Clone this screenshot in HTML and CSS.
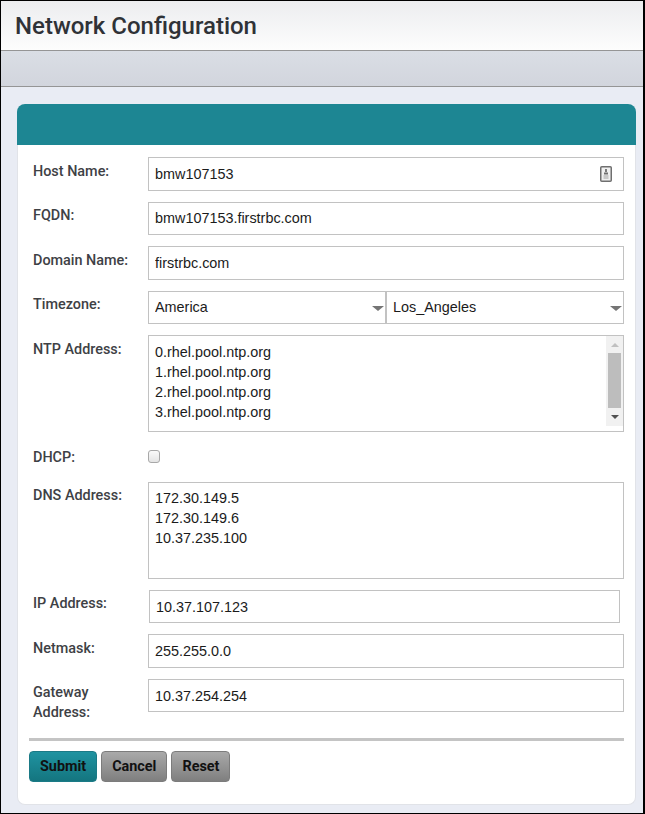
FILE: index.html
```html
<!DOCTYPE html>
<html lang="en">
<head>
<meta charset="utf-8">
<title>Network Configuration</title>
<link rel="stylesheet" href="styles.css">
</head>
<body>
<div class="frame">
  <header class="title-bar"><h1>Network Configuration</h1></header>
  <div class="sub-bar"></div>
  <main class="content">
    <section class="card">
      <div class="card-head"></div>
      <form class="card-body">
        <div class="row">
          <label class="lbl">Host Name:</label>
          <div class="field">
            <input class="inp" type="text" value="bmw107153">
            <svg class="host-icon" width="12" height="16" viewBox="0 0 12 16">
              <rect x="0.75" y="0.75" width="10.5" height="14.5" rx="1" fill="#f0f0f0" stroke="#6f6f6f" stroke-width="1.5"/>
              <path d="M6 3 L6 6 M4 7.5 L8 7.5" stroke="#6f6f6f" stroke-width="1.8" fill="none"/>
              <path d="M3.5 10 H8.5 M3.5 12 H8.5" stroke="#a0a0a0" stroke-width="1.2" fill="none"/>
            </svg>
          </div>
        </div>
        <div class="row"><label class="lbl">FQDN:</label><div class="field"><input class="inp" type="text" value="bmw107153.firstrbc.com"></div></div>
        <div class="row"><label class="lbl">Domain Name:</label><div class="field"><input class="inp" type="text" value="firstrbc.com"></div></div>
        <div class="row">
          <label class="lbl">Timezone:</label>
          <div class="field selects">
            <div class="sel"><select class="inp"><option>America</option></select></div>
            <div class="sel"><select class="inp"><option>Los_Angeles</option></select></div>
          </div>
        </div>
        <div class="row">
          <label class="lbl">NTP Address:</label>
          <div class="field">
            <textarea class="inp area" readonly>0.rhel.pool.ntp.org
1.rhel.pool.ntp.org
2.rhel.pool.ntp.org
3.rhel.pool.ntp.org</textarea>
            <div class="scroll">
              <span class="arrow up"></span>
              <span class="thumb"></span>
              <span class="arrow down"></span>
            </div>
          </div>
        </div>
        <div class="row row-check"><label class="lbl">DHCP:</label><div class="field"><span class="check"></span></div></div>
        <div class="row">
          <label class="lbl">DNS Address:</label>
          <div class="field"><textarea class="inp area area-dns" readonly>172.30.149.5
172.30.149.6
10.37.235.100</textarea></div>
        </div>
        <div class="row"><label class="lbl">IP Address:</label><div class="field field-ip"><input class="inp" type="text" value="10.37.107.123"></div></div>
        <div class="row"><label class="lbl">Netmask:</label><div class="field"><input class="inp" type="text" value="255.255.0.0"></div></div>
        <div class="row row-last"><label class="lbl">Gateway Address:</label><div class="field"><input class="inp" type="text" value="10.37.254.254"></div></div>
        <div class="divider"></div>
        <div class="actions">
          <button type="button" class="btn btn-primary">Submit</button>
          <button type="button" class="btn">Cancel</button>
          <button type="button" class="btn">Reset</button>
        </div>
      </form>
    </section>
  </main>
</div>
</body>
</html>
```

FILE: styles.css
```css
* { box-sizing: border-box; }
html, body { margin: 0; padding: 0; height: 100%; }
body { font-family: "Liberation Sans", Arial, sans-serif; background: #000; }
.frame {
  width: 645px;
  height: 814px;
  border: 1px solid #000;
  border-right-width: 2px;
  background: #e9ecf4;
  overflow: hidden;
}
.title-bar {
  height: 50px;
  background: linear-gradient(#ecedef, #fdfdfd);
  border-bottom: 1px solid #959595;
  padding: 10px 0 0 14px;
}
.title-bar h1 {
  margin: 0;
  font-family: Roboto, sans-serif;
  font-weight: 500;
  font-size: 24px;
  line-height: 30px;
  color: #2f3237;
}
.sub-bar {
  height: 36px;
  background: linear-gradient(#dadee5, #d2d5dd);
  border-bottom: 1px solid #959595;
}
.content { padding: 17px 7px 0 16px; }
.card {
  height: 701px;
  background: #fff;
  border: 1px solid #e1e3e8;
  border-top: 0;
  border-radius: 8px;
}
.card-head {
  height: 41px;
  margin: 0 -1px;
  background: #1d8693;
  border-radius: 8px 8px 0 0;
}
.card-body { padding: 12px 11px 0 11px; }
.row { display: flex; margin-bottom: 11px; }
.row-check { height: 27.4px; }
.row-last { margin-top: -0.2px; margin-bottom: 15px; min-height: 44px; }
.lbl {
  flex: 0 0 119px;
  padding: 4.6px 4px 0 4px;
  font-family: Roboto, sans-serif;
  font-weight: 500;
  font-size: 14.4px;
  line-height: 20px;
  color: #3e4145;
}
.field { position: relative; flex: 1; min-width: 0; }
.field-ip { padding: 0 4px 0 1px; }
.inp {
  display: block;
  width: 100%;
  height: 33.6px;
  margin: 0;
  padding: 0 6px;
  border: 1px solid #c2c2c2;
  border-radius: 0;
  background: #fff;
  font-family: "Liberation Sans", Arial, sans-serif;
  font-size: 14.4px;
  color: #1b1b1b;
  outline: none;
}
.area {
  height: 97px;
  padding: 6px 6px;
  line-height: 20px;
  resize: none;
  overflow: hidden;
}
.area-dns { padding-top: 5px; }
.host-icon { position: absolute; right: 12px; top: 9px; }
.selects { display: flex; }
.sel { position: relative; flex: 1; }
.sel select { appearance: none; -webkit-appearance: none; padding-bottom: 1px; }
.sel::after {
  content: "";
  position: absolute;
  right: 2px;
  top: 15px;
  border-style: solid;
  border-width: 5px 6px 0;
  border-color: #757575 transparent transparent;
}
.scroll {
  position: absolute;
  right: 1px;
  top: 1px;
  width: 17px;
  height: 90px;
  background: #f1f1f1;
  display: flex;
  flex-direction: column;
  align-items: center;
}
.thumb { width: 13px; height: 55px; background: #bdbdbd; }
.arrow { width: 0; border-style: solid; }
.arrow.up { height: 0; margin: 7px 0 6px; border-width: 0 4px 4px; border-color: transparent transparent #c0c0c0; }
.arrow.down { height: 0; margin-top: 7px; border-width: 4px 4px 0; border-color: #505050 transparent transparent; }
.check {
  display: block;
  width: 12px;
  height: 13px;
  margin-top: 7px;
  border: 1px solid #a8a8a8;
  border-radius: 3px;
  background: linear-gradient(#fafafa, #e4e4e4);
}
.divider { height: 3px; background: #c4c4c4; margin-bottom: 10px; }
.actions { display: flex; gap: 4px; }
.btn {
  height: 31px;
  padding: 0 10px;
  border: 1px solid #7c7c7c;
  border-radius: 4px;
  background: linear-gradient(#a9a9a9, #7f7f7f);
  font-family: Roboto, sans-serif;
  font-weight: 700;
  font-size: 14.4px;
  color: #111;
}
.btn-primary {
  border-color: #1b7a86;
  background: linear-gradient(#1f93a1, #14757f);
}
```
